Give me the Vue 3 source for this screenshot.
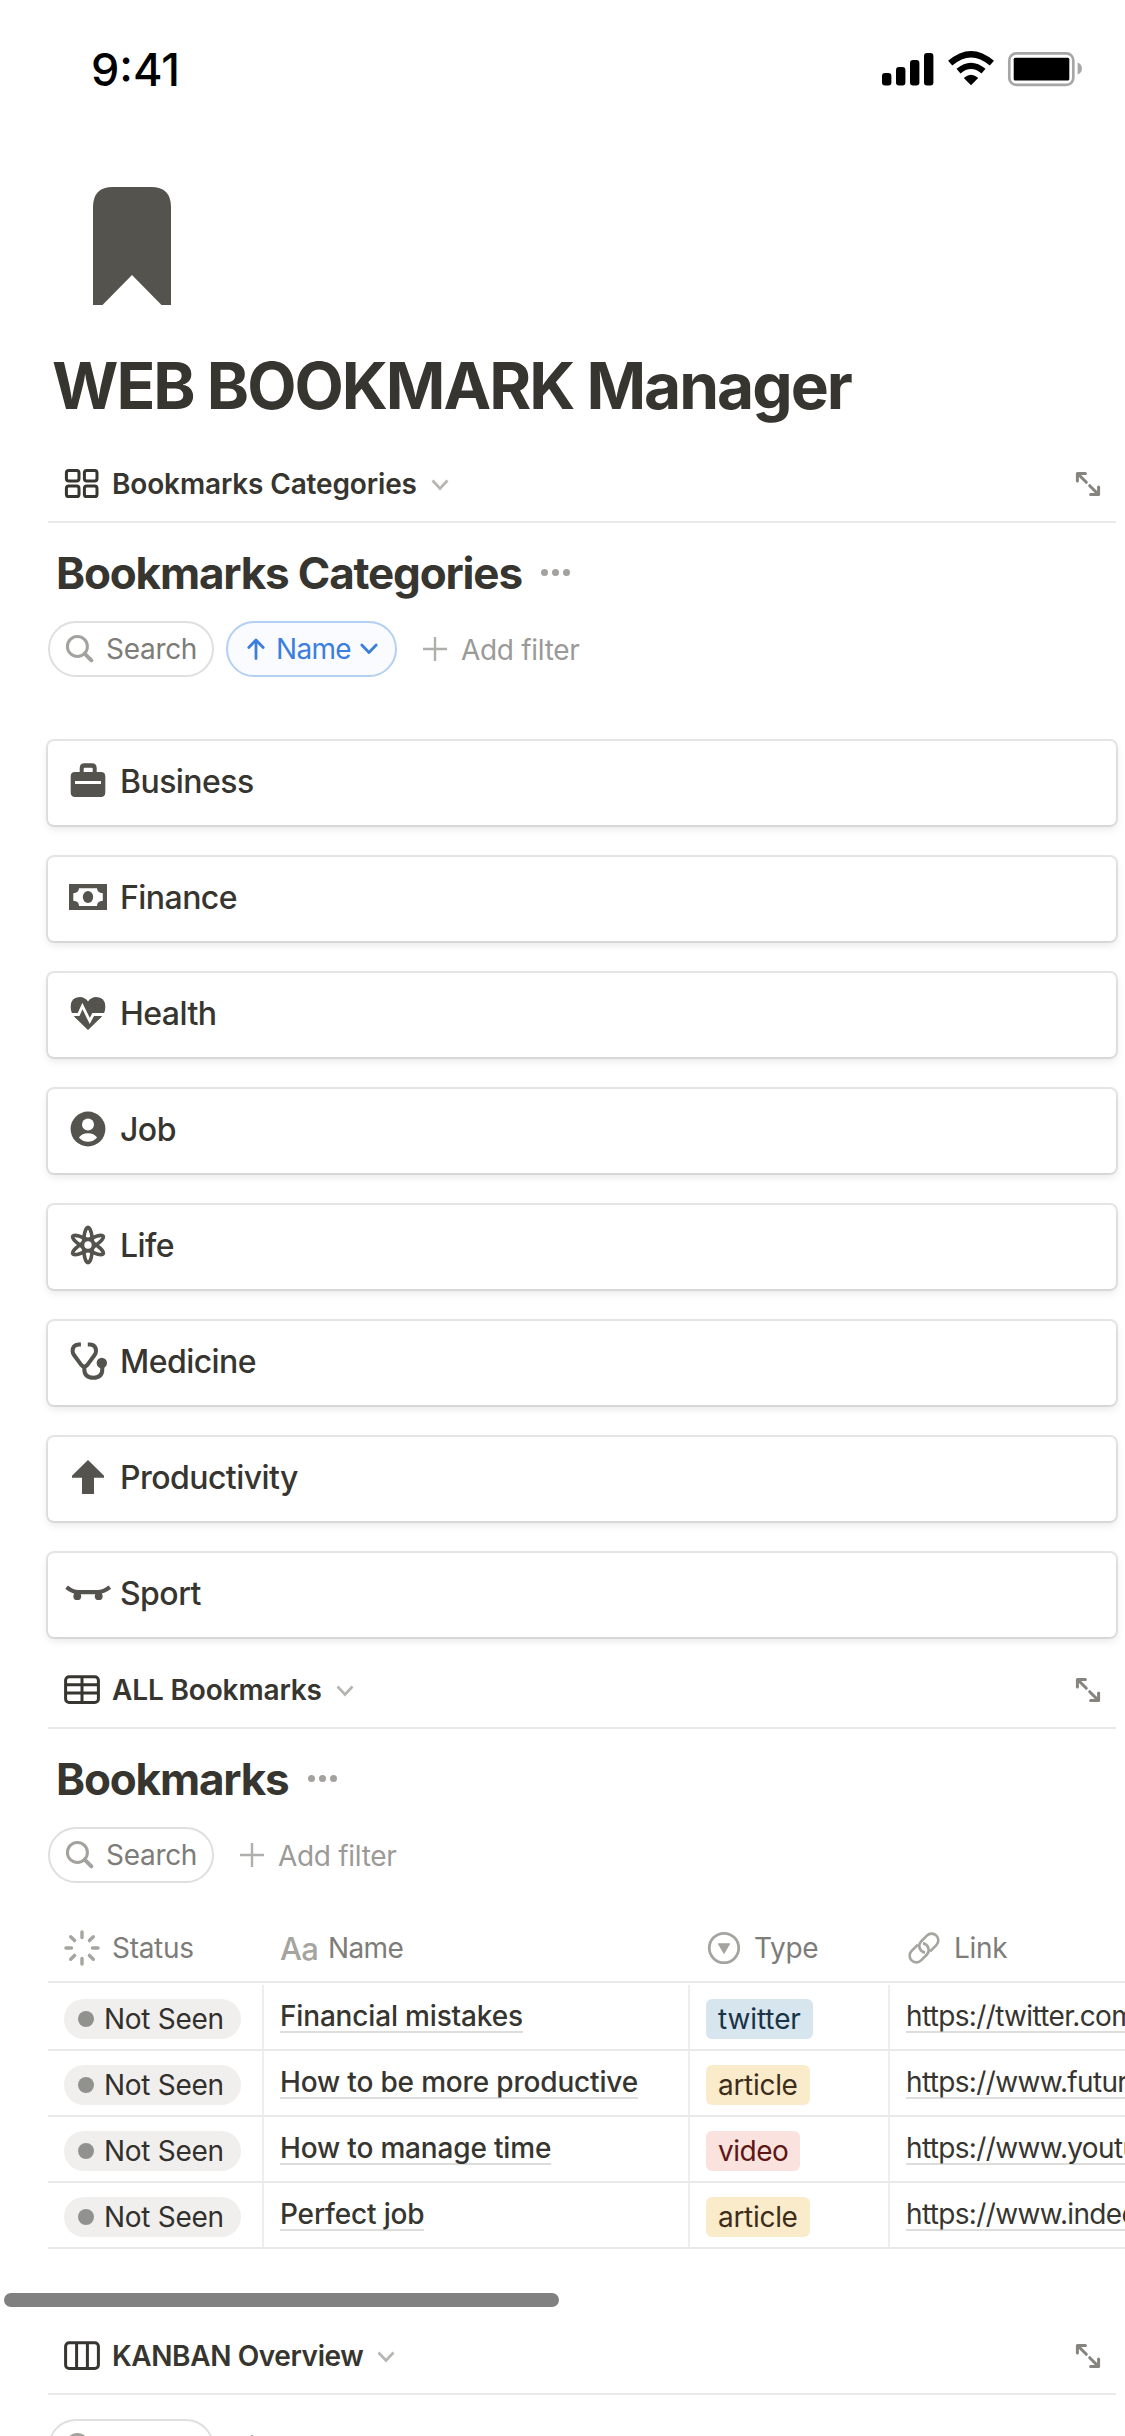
<template>
  <div class="screen">
    <!-- Status bar -->
    <div class="status-bar">
      <span class="clock">9:41</span>
      <svg class="status-icons" width="204" height="40" viewBox="0 0 204 40">
        <rect x="2" y="24" width="9.4" height="12.4" rx="3" />
        <rect x="16" y="18" width="9.4" height="18.4" rx="3" />
        <rect x="30" y="11" width="9.4" height="25.4" rx="3" />
        <rect x="44" y="4" width="9.4" height="32.4" rx="3" />
        <path d="M91 36.2 L84.3 29.4 Q84 28.8 84.7 28.2 Q91 23.2 97.4 28.2 Q98 28.8 97.7 29.4 Z" />
        <path d="M78.5 22.2 Q91 11.6 103.5 22.2" fill="none" stroke="#000" stroke-width="6.2" />
        <path d="M70.2 14.2 Q91 -3.8 111.9 14.2" fill="none" stroke="#000" stroke-width="6.4" />
        <rect x="129.3" y="4.3" width="64" height="31.6" rx="7" fill="none" stroke="#a6a6a6" stroke-width="2.7" />
        <rect x="133.7" y="8.7" width="55.6" height="22.8" rx="1.5" />
        <path d="M197.6 13.5 Q201.9 15 201.9 19.5 Q201.9 24 197.6 25.5 Z" fill="#a6a6a6" />
      </svg>
    </div>

    <svg class="page-icon" width="78" height="118" viewBox="0 0 78 118">
      <path d="M0 20 Q0 0 20 0 H58 Q78 0 78 20 V118 H68.5 L39 88 L9.5 118 H0 Z" />
    </svg>
    <h1 class="page-title">WEB BOOKMARK Manager</h1>

    <section v-for="view in views" :key="view.tab" class="view">
      <div class="tab-row">
        <svg class="tab-icon" width="36" height="36" viewBox="0 0 36 36">
          <template v-if="view.icon === 'gallery'">
            <rect x="2.4" y="4.4" width="12.6" height="10.6" rx="2.4" />
            <rect x="20.4" y="4.4" width="12.6" height="10.6" rx="2.4" />
            <rect x="2.4" y="20" width="12.6" height="10.6" rx="2.4" />
            <rect x="20.4" y="20" width="12.6" height="10.6" rx="2.4" />
          </template>
          <template v-else-if="view.icon === 'table'">
            <rect x="1.6" y="4.7" width="32.8" height="25.8" rx="3.6" />
            <path d="M2 12.8 H34 M2 21 H34 M18 5 V30" />
          </template>
          <template v-else>
            <rect x="1.6" y="4.7" width="32.8" height="25.8" rx="3.6" />
            <path d="M12.6 5 V30 M23.4 5 V30" />
          </template>
        </svg>
        <span class="tab-name" :class="`tab-${view.icon}`">{{ view.tab }}</span>
        <svg class="chevron" width="18" height="12" viewBox="0 0 18 12">
          <path d="M1.5 1.5 L9 9.5 L16.5 1.5" />
        </svg>
        <svg class="expand" width="26" height="26" viewBox="0 0 26 26">
          <path d="M2.4 10 V2.4 H10.4 M2.8 2.8 L11.3 11.3 M23.6 16 V23.6 H15.6 M23.2 23.2 L14.7 14.7" />
        </svg>
      </div>

      <div v-if="view.heading" class="heading-row">
        <h2 class="heading">{{ view.heading }}</h2>
        <span class="dots"><i></i><i></i><i></i></span>
      </div>

      <div class="filters">
        <div class="pill search">
          <svg width="30" height="30" viewBox="0 0 30 30">
            <circle cx="12.4" cy="12.4" r="10" />
            <path d="M19.6 19.6 L26.4 26.4" stroke-width="4" stroke-linecap="round" />
          </svg>
          <span>Search</span>
        </div>
        <div v-if="view.sort" class="pill sort">
          <svg width="18" height="22" viewBox="0 0 18 22">
            <path d="M9 20.5 V2.5 M1.8 9.5 L9 2 L16.2 9.5" />
          </svg>
          <span>{{ view.sort }}</span>
          <svg class="sort-chevron" width="18" height="12" viewBox="0 0 18 12">
            <path d="M1.8 2 L9 9.5 L16.2 2" />
          </svg>
        </div>
        <div class="add-filter">
          <svg width="24" height="24" viewBox="0 0 24 24">
            <path d="M12 0 V24 M0 12 H24" />
          </svg>
          <span>Add filter</span>
        </div>
      </div>

      <div v-if="view.icon === 'gallery'" class="cards">
        <div v-for="item in categories" :key="item" class="card">
          <svg class="card-icon" width="44" height="44" viewBox="0 0 44 44">
            <template v-if="item === 'Business'">
              <path
                fill-rule="evenodd"
                d="M9 15 H13.7 V11 Q13.7 6.3 18.4 6.3 H26 Q30.7 6.3 30.7 11 V15 H35 Q39.3 15 39.3 19.3 V35.6 Q39.3 40 35 40 H9 Q4.7 40 4.7 35.6 V19.3 Q4.7 15 9 15 Z M17.7 15 H26.7 V11.7 Q26.7 10.7 25.7 10.7 H18.7 Q17.7 10.7 17.7 11.7 Z M9 24 V27 H35 V24 Z"
              />
            </template>
            <template v-else-if="item === 'Finance'">
              <path
                fill-rule="evenodd"
                d="M3 11 H41 V37 H3 Z M13 15.3 Q13 20 7.3 20.3 V27.8 Q13 28.3 13 33 H31 Q31 28.3 36.8 27.8 V20.3 Q31 20 31 15.3 Z"
              />
              <ellipse cx="22" cy="24" rx="5.2" ry="6" />
            </template>
            <template v-else-if="item === 'Health'">
              <path
                d="M22 41 L9 28.6 Q4.7 24 4.7 18 Q4.7 8 13.8 8 Q19 8 22 12.5 Q25 8 30.2 8 Q39.3 8 39.3 18 Q39.3 24 35 28.6 Z"
              />
              <path d="M4 25.5 H12.6 L16.4 17 L23.8 32 L27.2 25.5 H40" class="knockout" />
            </template>
            <template v-else-if="item === 'Job'">
              <circle cx="22" cy="24" r="17.4" />
              <circle cx="22" cy="19.6" r="6" fill="#fff" />
              <path d="M12.9 32.6 Q16 28.2 22 28.2 Q28 28.2 31.1 32.6 Q27.5 36.8 22 36.8 Q16.5 36.8 12.9 32.6 Z" fill="#fff" />
            </template>
            <template v-else-if="item === 'Life'">
              <g fill="none" stroke="#55534e" stroke-width="3.6">
                <ellipse v-for="deg in [0, 60, 120]" :key="deg" cx="22" cy="24" rx="4.6" ry="17.6" :transform="`rotate(${deg} 22 24)`" />
                <circle cx="22" cy="24" r="5.6" />
              </g>
              <circle cx="22" cy="24" r="3.7" fill="#fff" />
            </template>
            <template v-else-if="item === 'Medicine'">
              <g fill="none" stroke="#55534e" stroke-width="4">
                <path d="M14.9 7.4 H12.5 Q6.6 8 6.6 14 Q6.6 16 8 18 L15 27.6 Q18.3 31.4 21.6 27.6 L28.6 18 Q30 16 30 14 Q30 8 24.4 7.4 H21.8" />
                <path d="M18.3 29.5 V32 Q18.3 40.8 27.3 40.8 Q36.3 40.8 36.3 32 V28" />
              </g>
              <circle cx="35.8" cy="26" r="5.2" />
            </template>
            <template v-else-if="item === 'Productivity'">
              <path d="M22 7 L38 22.8 V24.8 H28 V41 H16 V24.8 H6 V22.8 Z" />
            </template>
            <template v-else>
              <path d="M0.6 18.2 Q6.5 23.2 12.5 23.2 H31.5 Q37.5 23.2 43.8 18.2" fill="none" stroke="#55534e" stroke-width="4.2" />
              <circle cx="11.3" cy="27.2" r="3.9" />
              <circle cx="32.7" cy="27.2" r="3.9" />
            </template>
          </svg>
          <span class="card-name">{{ item }}</span>
        </div>
      </div>

      <div v-if="view.icon === 'table'" class="table">
        <div class="table-row table-head">
          <div class="cell status">
            <svg width="36" height="36" viewBox="0 0 36 36" class="head-icon loader">
              <path v-for="n in 8" :key="n" d="M18 2 V7.5" :transform="`rotate(${n * 45} 18 18)`" />
            </svg>
            <span class="h-label">Status</span>
          </div>
          <div class="cell name">
            <span class="aa">Aa</span>
            <span class="h-label">Name</span>
          </div>
          <div class="cell type">
            <svg width="36" height="36" viewBox="0 0 36 36" class="head-icon">
              <circle cx="18" cy="18" r="14.7" />
              <path d="M12.3 13.8 H23.7 L18 23.4 Z" fill="#a5a49f" stroke-width="1" stroke-linejoin="round" />
            </svg>
            <span class="h-label">Type</span>
          </div>
          <div class="cell link">
            <svg width="36" height="36" viewBox="0 0 36 36" class="head-icon chain">
              <g transform="rotate(-45 18 18)">
                <path d="M16 11.3 H7.2 A6.7 6.7 0 0 0 7.2 24.7 H15.5 A6.7 6.7 0 0 0 20.5 14" />
                <path d="M20 24.7 H28.8 A6.7 6.7 0 0 0 28.8 11.3 H20.5 A6.7 6.7 0 0 0 15.5 22" />
              </g>
            </svg>
            <span class="h-label">Link</span>
          </div>
        </div>
        <div v-for="row in bookmarks" :key="row.name" class="table-row">
          <div class="cell status">
            <span class="badge"><i></i>Not Seen</span>
          </div>
          <div class="cell name">
            <span class="underlined strong">{{ row.name }}</span>
          </div>
          <div class="cell type">
            <span class="tag" :class="row.type">{{ row.type }}</span>
          </div>
          <div class="cell link">
            <span class="underlined url">{{ row.link }}</span>
          </div>
        </div>
      </div>
      <div v-if="view.icon === 'table'" class="scrollbar"></div>
    </section>
  </div>
</template>

<script setup>
const views = [
  { icon: 'gallery', tab: 'Bookmarks Categories', heading: 'Bookmarks Categories', sort: 'Name' },
  { icon: 'table', tab: 'ALL Bookmarks', heading: 'Bookmarks' },
  { icon: 'board', tab: 'KANBAN Overview' }
]

const categories = ['Business', 'Finance', 'Health', 'Job', 'Life', 'Medicine', 'Productivity', 'Sport']

const bookmarks = [
  { name: 'Financial mistakes', type: 'twitter', link: 'https://twitter.com' },
  { name: 'How to be more productive', type: 'article', link: 'https://www.future' },
  { name: 'How to manage time', type: 'video', link: 'https://www.youtube' },
  { name: 'Perfect job', type: 'article', link: 'https://www.indeed' }
]
</script>

<style>
body {
  margin: 0;
  background: #fff;
}
</style>

<style scoped>
.screen {
  width: 1125px;
  height: 2436px;
  overflow: hidden;
  background: #fff;
  color: #37352f;
  font-family: Inter, 'Liberation Sans', sans-serif;
  font-size: 28px;
  letter-spacing: -0.3px;
}

svg {
  display: block;
  flex: none;
  overflow: visible;
}

.status-bar {
  display: flex;
  justify-content: space-between;
  align-items: center;
  height: 138px;
  padding: 0 41px 0 91px;
  box-sizing: border-box;
}

.clock {
  font-size: 45px;
  font-weight: 550;
  letter-spacing: 0;
  color: #000;
}

.page-icon {
  margin: 49px 0 0 93px;
  fill: #55534e;
}

.page-title {
  margin: 41px 0 0 52px;
  height: 80px;
  line-height: 80px;
  font-size: 64px;
  font-weight: 700;
  letter-spacing: -2px;
  white-space: nowrap;
}

.view {
  padding-left: 48px;
}

.tab-row {
  display: flex;
  align-items: center;
  height: 75px;
  margin-right: 9px;
  padding: 2px 15px 0 16px;
  border-bottom: 2px solid #e9e9e8;
}

.view:nth-of-type(1) .tab-row {
  margin-top: 18px;
}

.tab-icon {
  fill: none;
  stroke: #37352f;
  stroke-width: 3;
}

.tab-name {
  margin-left: 12px;
  font-weight: 600;
  letter-spacing: -0.15px;
}

.tab-board {
  letter-spacing: -0.4px;
}

.chevron {
  margin: 2px 0 0 14px;
  fill: none;
  stroke: #b6b5b2;
  stroke-width: 2.6;
}

.expand {
  margin-left: auto;
  fill: none;
  stroke: #85847f;
  stroke-width: 3;
  stroke-linecap: round;
  stroke-linejoin: round;
}

.heading-row {
  display: flex;
  align-items: center;
  height: 96px;
  padding: 2px 0 0 8px;
}

.heading {
  margin: 0;
  font-size: 44px;
  font-weight: 700;
  letter-spacing: -1.17px;
}

.dots {
  display: flex;
  gap: 4px;
  margin: -2px 0 0 19px;
}

.dots i {
  width: 7px;
  height: 7px;
  border-radius: 50%;
  background: #a3a29e;
}

.filters {
  display: flex;
  align-items: center;
  height: 56px;
}

.tab-row + .filters {
  margin-top: 24px;
}

.pill {
  display: flex;
  align-items: center;
  box-sizing: border-box;
  height: 56px;
  border: 2px solid #dfdfde;
  border-radius: 28px;
  color: #7d7c78;
}

.search {
  width: 166px;
  padding-left: 15px;
}

.search svg {
  fill: none;
  stroke: #a3a29e;
  stroke-width: 3;
}

.search span {
  margin-left: 11px;
}

.sort {
  width: 171px;
  margin-left: 12px;
  padding-left: 19px;
  background: #fafbff;
  border-color: #b3d0f3;
  color: #3b7edd;
}

.sort svg {
  fill: none;
  stroke: #3b7edd;
  stroke-width: 2.8;
  stroke-linecap: round;
  stroke-linejoin: round;
}

.sort span {
  margin-left: 11px;
  letter-spacing: -0.7px;
}

.sort .sort-chevron {
  margin-left: 9px;
}

.add-filter {
  display: flex;
  align-items: center;
  margin-left: 26px;
  color: #9b9a97;
}

.add-filter svg {
  stroke: #b0afac;
  stroke-width: 2.4;
}

.add-filter span {
  margin: 1px 0 0 14px;
}

.cards {
  display: flex;
  flex-direction: column;
  gap: 32px;
  margin: 64px 9px 13px 0;
}

.card {
  display: flex;
  align-items: center;
  height: 84px;
  padding-left: 18px;
  box-sizing: border-box;
  border-radius: 6px;
  background: #fff;
  box-shadow: rgba(15, 15, 15, 0.1) 0 0 0 2px, rgba(15, 15, 15, 0.1) 0 4px 8px;
}

.card-icon {
  margin-top: -8px;
  fill: #55534e;
}

.knockout {
  fill: none;
  stroke: #fff;
  stroke-width: 2.8;
}

.card-name {
  margin: -3px 0 0 10px;
  font-size: 32px;
  font-weight: 500;
  letter-spacing: -0.55px;
}

.table {
  width: 1400px;
  margin-top: 32px;
}

.table-row {
  display: flex;
  height: 64px;
  border-bottom: 2px solid #e9e9e8;
}

.cell {
  display: flex;
  align-items: center;
  box-sizing: border-box;
  padding-left: 16px;
  border-right: 2px solid #eeeeed;
}

.status {
  width: 216px;
}

.name {
  width: 426px;
}

.type {
  width: 200px;
}

.link {
  flex: 1;
}

.table-head {
  height: 66px;
  color: #7d7c78;
}

.table-head .cell {
  border-color: transparent;
}

.table-head + .table-row {
  padding-top: 2px;
}

.head-icon {
  fill: none;
  stroke: #a5a49f;
  stroke-width: 2.8;
}

.loader {
  stroke-width: 3.4;
  stroke-linecap: round;
}

.chain {
  stroke-width: 2.6;
}

.h-label {
  margin-left: 12px;
}

.aa {
  font-size: 31px;
  font-weight: 500;
  letter-spacing: -0.8px;
  color: #a5a49f;
}

.aa + .h-label {
  margin-left: 10px;
  letter-spacing: -0.6px;
}

.badge {
  display: flex;
  align-items: center;
  box-sizing: border-box;
  width: 177px;
  height: 40px;
  margin-top: 4px;
  padding-left: 14px;
  border-radius: 20px;
  background: #f0efee;
  color: #32302c;
}

.badge i {
  width: 16px;
  height: 16px;
  margin-right: 10px;
  border-radius: 50%;
  background: #91918e;
}

.underlined {
  height: 31px;
  line-height: 32px;
  margin-top: -1px;
  border-bottom: 2px solid #dddddb;
  white-space: nowrap;
}

.strong {
  font-weight: 500;
  letter-spacing: -0.17px;
}

.url {
  letter-spacing: -0.65px;
}

.tag {
  height: 40px;
  line-height: 40px;
  margin-top: 4px;
  padding: 0 12px;
  border-radius: 6px;
}

.twitter {
  background: #d7e5ee;
  color: #183347;
  letter-spacing: -0.1px;
}

.article {
  background: #faecca;
  color: #402c1b;
}

.video {
  background: #fae2de;
  color: #5d1715;
  letter-spacing: -0.5px;
}

.scrollbar {
  width: 555px;
  height: 14px;
  margin: 44px 0 9px -44px;
  border-radius: 7px;
  background: #808080;
}
</style>
